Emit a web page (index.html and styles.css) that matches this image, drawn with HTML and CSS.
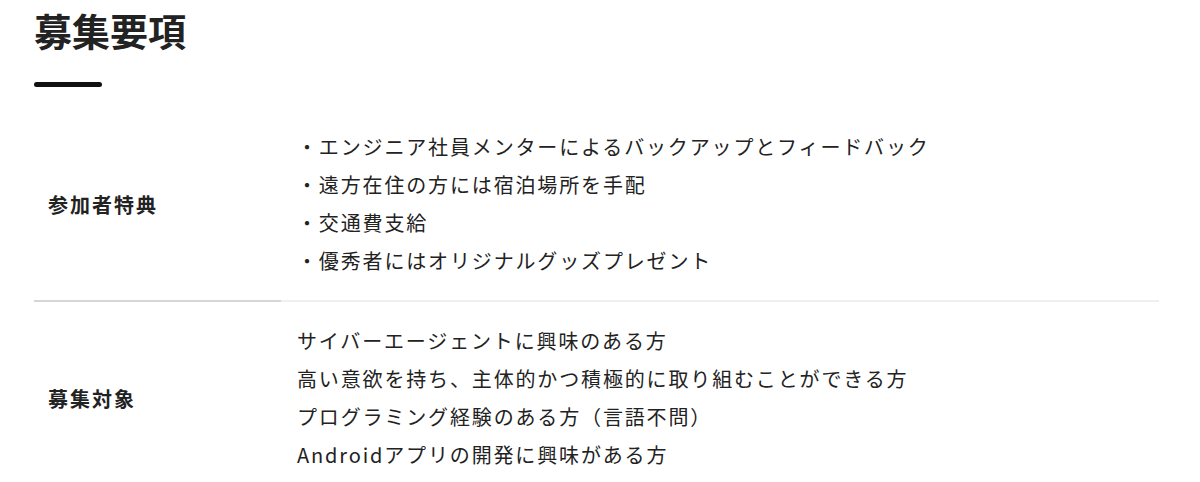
FILE: index.html
```html
<!DOCTYPE html>
<html lang="ja">
<head>
<meta charset="utf-8">
<link rel="stylesheet" href="styles.css">
</head>
<body>
<div class="page">
  <h1 class="title">募集要項</h1>
  <div class="title-bar"></div>
  <div class="table">
    <div class="row">
      <div class="label">参加者特典</div>
      <div class="content">
        <p>・エンジニア社員メンターによるバックアップとフィードバック</p>
        <p>・遠方在住の方には宿泊場所を手配</p>
        <p>・交通費支給</p>
        <p>・優秀者にはオリジナルグッズプレゼント</p>
      </div>
    </div>
    <div class="row">
      <div class="label">募集対象</div>
      <div class="content">
        <p>サイバーエージェントに興味のある方</p>
        <p>高い意欲を持ち、主体的かつ積極的に取り組むことができる方</p>
        <p>プログラミング経験のある方（言語不問）</p>
        <p>Androidアプリの開発に興味がある方</p>
      </div>
    </div>
  </div>
</div>
</body>
</html>
```

FILE: styles.css
```css
html, body {
  margin: 0;
  padding: 0;
  background: #fff;
}
body {
  font-family: "Noto Sans CJK JP", "Noto Sans", sans-serif;
  color: #222;
}
.page {
  padding: 0 41px 0 34px;
}
.title {
  margin: 0;
  padding-top: 6px;
  font-size: 38px;
  line-height: 48px;
  font-weight: 700;
}
.title-bar {
  margin-top: 28px;
  width: 68px;
  height: 5px;
  border-radius: 3px;
  background: #111;
}
.table {
  margin-top: 21px;
}
.row {
  display: flex;
  align-items: center;
}
.row:first-child {
  padding-bottom: 2px;
  background-image: linear-gradient(#d6d6d6, #d6d6d6), linear-gradient(#efefef, #efefef);
  background-repeat: no-repeat;
  background-size: 247px 2px, 100% 2px;
  background-position: left bottom, left bottom;
}
.label {
  width: 233px;
  padding-left: 14px;
  flex: none;
  font-size: 20px;
  font-weight: 700;
  letter-spacing: 2px;
}
.content {
  padding: 20px 0 20px 16px;
  font-size: 20px;
  letter-spacing: 1.85px;
}
.content p {
  margin: 0;
  line-height: 38px;
}
```
